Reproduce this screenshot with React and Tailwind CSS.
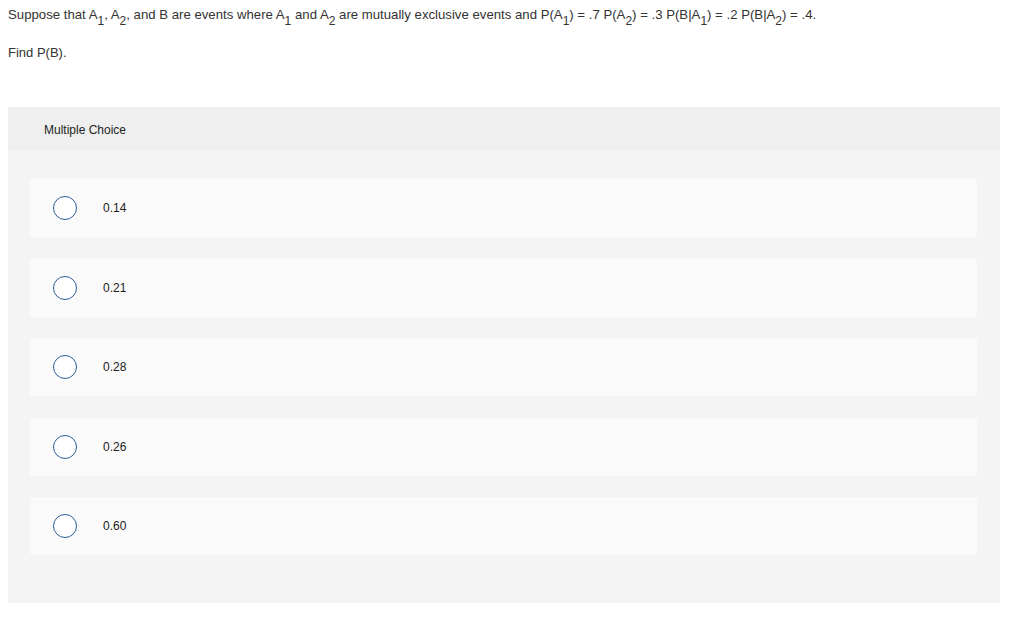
import React from 'react';

const options = ['0.14', '0.21', '0.28', '0.26', '0.60'];

const A = ({ n }) => (
  <span>
    A<sub className="text-[12px] align-[-3px]">{n}</sub>
  </span>
);

export default function App() {
  return (
    <div className="min-h-screen bg-white text-[#333] font-['Liberation_Sans',Arial,sans-serif]">
      <div className="px-2 pt-[7px] text-[13.2px] leading-[16px]">
        Suppose that <A n="1" />, <A n="2" />, and B are events where <A n="1" /> and <A n="2" /> are mutually
        exclusive events and P(<A n="1" />) = .7 P(<A n="2" />) = .3 P(B|<A n="1" />) = .2 P(B|<A n="2" />) = .4.
      </div>
      <div className="px-2 mt-[22px] text-[13px] leading-[16px]">Find P(B).</div>

      <div className="mx-2 mt-[46px] w-[992px] bg-[#f4f4f4] pb-[48px]">
        <div className="h-[43px] bg-[#efefef] flex items-center pl-9 pt-[2px] text-[12px] text-[#222]">
          Multiple Choice
        </div>
        <div className="flex flex-col gap-[21.5px] pt-[29px] pl-[22px] pr-[23px]">
          {options.map((o) => (
            <label
              key={o}
              className="h-[58px] rounded-[3px] bg-[#fafafa] flex items-center pl-[23px] cursor-pointer"
            >
              <span className="w-[24px] h-[24px] rounded-full border border-[#2b5c98] bg-white shrink-0" />
              <span className="ml-[26px] text-[12px] text-[#222]">{o}</span>
            </label>
          ))}
        </div>
      </div>
    </div>
  );
}
